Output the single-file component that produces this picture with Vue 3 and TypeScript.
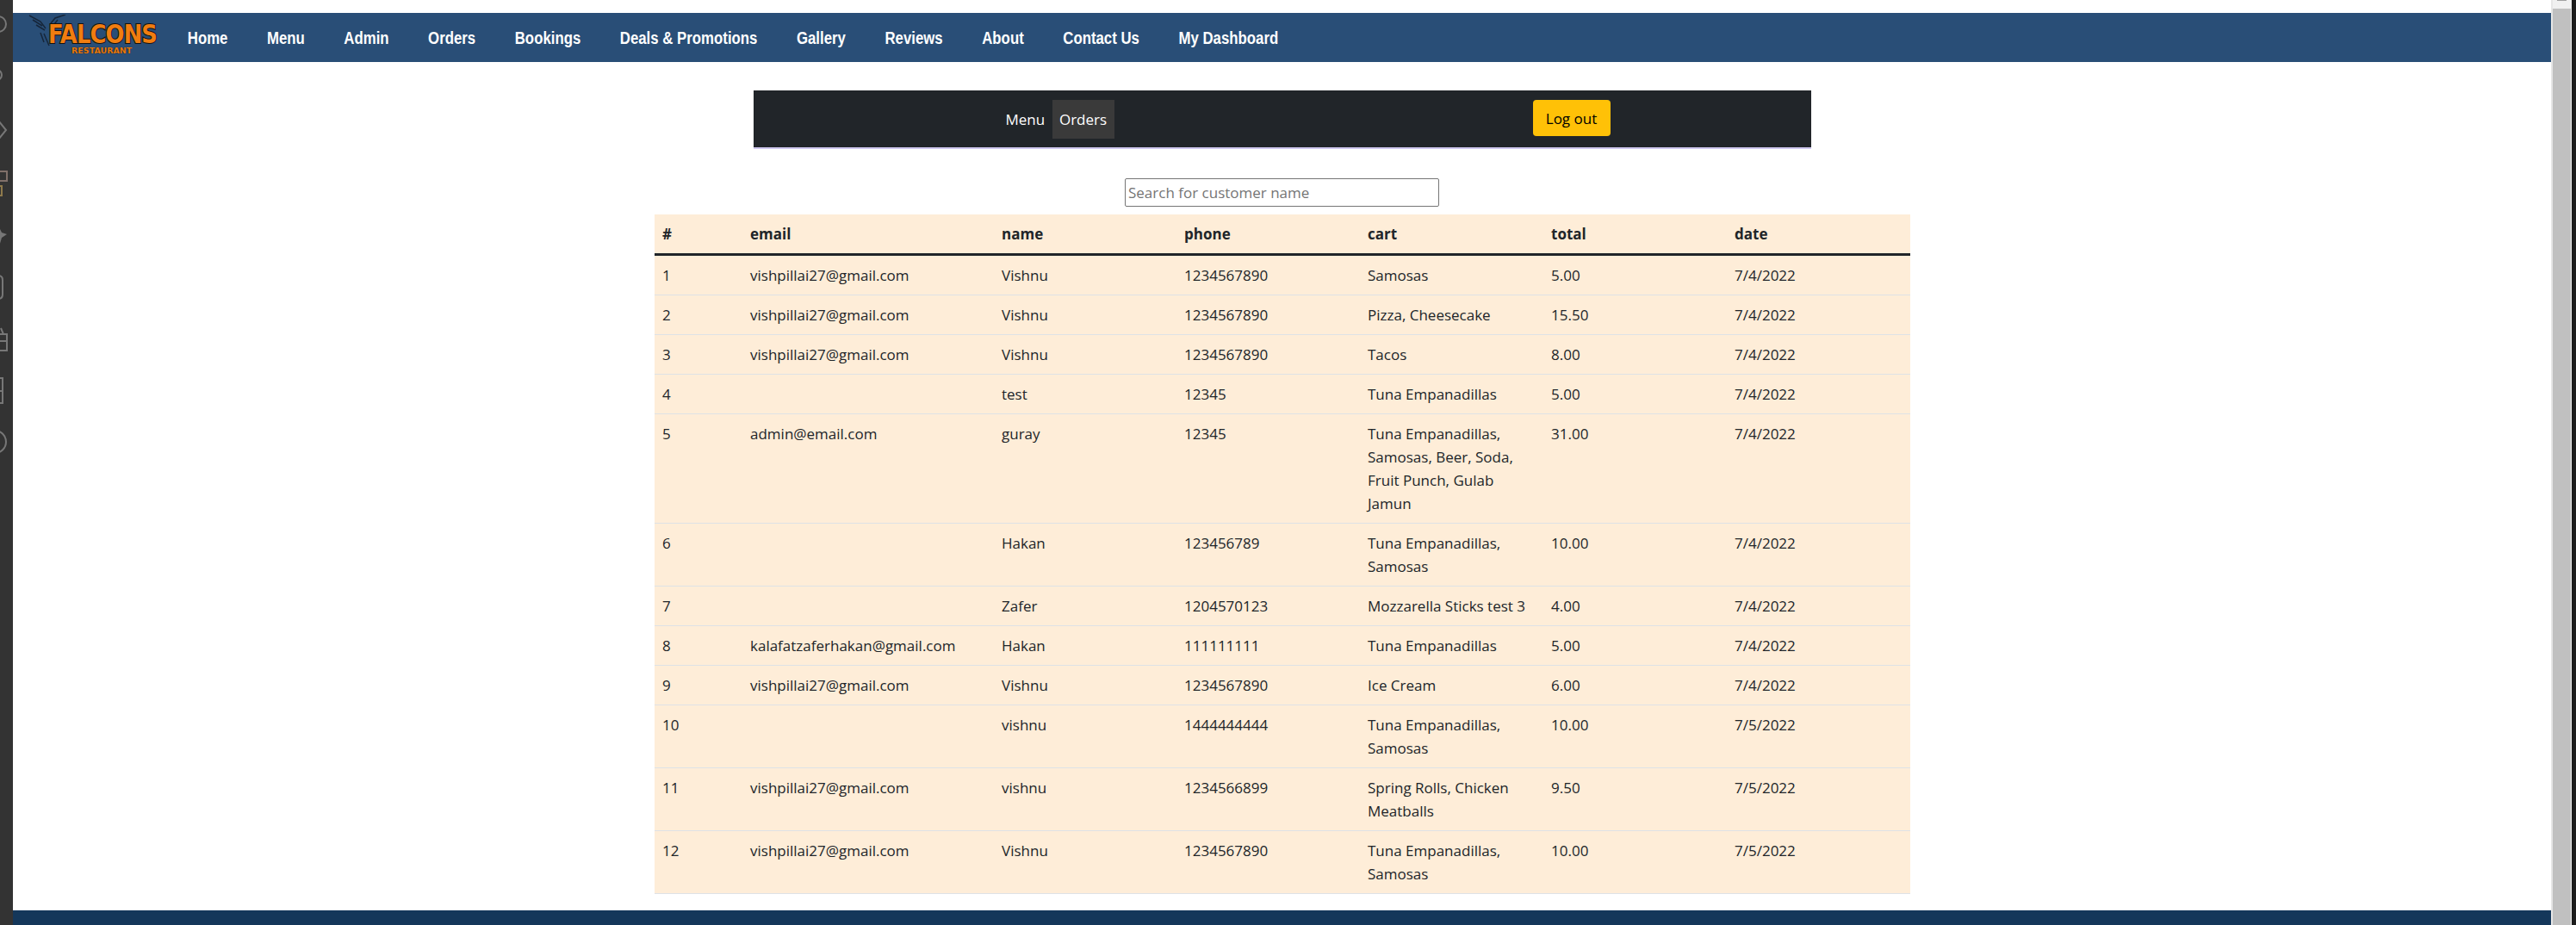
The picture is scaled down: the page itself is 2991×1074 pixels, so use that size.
<script setup lang="ts">
interface Order {
  id: number
  email: string
  name: string
  phone: string
  cart: string
  total: string
  date: string
}

const links: string[] = ['Home', 'Menu', 'Admin', 'Orders', 'Bookings', 'Deals & Promotions', 'Gallery', 'Reviews', 'About', 'Contact Us', 'My Dashboard']
const mail = 'vishpillai27@gmail.com'
const tuna = 'Tuna Empanadillas'

const orders: Order[] = [
  { id: 1, email: mail, name: 'Vishnu', phone: '1234567890', cart: 'Samosas', total: '5.00', date: '7/4/2022' },
  { id: 2, email: mail, name: 'Vishnu', phone: '1234567890', cart: 'Pizza, Cheesecake', total: '15.50', date: '7/4/2022' },
  { id: 3, email: mail, name: 'Vishnu', phone: '1234567890', cart: 'Tacos', total: '8.00', date: '7/4/2022' },
  { id: 4, email: '', name: 'test', phone: '12345', cart: tuna, total: '5.00', date: '7/4/2022' },
  { id: 5, email: 'admin@email.com', name: 'guray', phone: '12345', cart: 'Tuna Empanadillas, Samosas, Beer, Soda, Fruit Punch, Gulab Jamun', total: '31.00', date: '7/4/2022' },
  { id: 6, email: '', name: 'Hakan', phone: '123456789', cart: 'Tuna Empanadillas, Samosas', total: '10.00', date: '7/4/2022' },
  { id: 7, email: '', name: 'Zafer', phone: '1204570123', cart: 'Mozzarella Sticks test 3', total: '4.00', date: '7/4/2022' },
  { id: 8, email: 'kalafatzaferhakan@gmail.com', name: 'Hakan', phone: '111111111', cart: tuna, total: '5.00', date: '7/4/2022' },
  { id: 9, email: mail, name: 'Vishnu', phone: '1234567890', cart: 'Ice Cream', total: '6.00', date: '7/4/2022' },
  { id: 10, email: '', name: 'vishnu', phone: '1444444444', cart: 'Tuna Empanadillas, Samosas', total: '10.00', date: '7/5/2022' },
  { id: 11, email: mail, name: 'vishnu', phone: '1234566899', cart: 'Spring Rolls, Chicken Meatballs', total: '9.50', date: '7/5/2022' },
  { id: 12, email: mail, name: 'Vishnu', phone: '1234567890', cart: 'Tuna Empanadillas, Samosas', total: '10.00', date: '7/5/2022' },
]
</script>

<template>
  <div class="shell">
    <aside class="rail">
      <svg width="15" height="1074" viewBox="0 0 15 1074" fill="none" stroke="#777" stroke-width="2">
        <circle cx="-2" cy="28" r="9" />
        <circle cx="-4" cy="87" r="6" />
        <path d="M-2 140 L7 151 L-2 162" />
        <path d="M-2 199 H8 V210 H-2" stroke="#80706a" />
        <path d="M-2 216 H2 V227 H-2" stroke="#8f7a4c" />
        <path d="M-2 262 L2 270 L8 272 L2 276 L-1 286" fill="#777" stroke="none" />
        <path d="M-2 320 Q3 320 3 325 V342 Q3 347 -2 347" />
        <path d="M-2 388 H8 V407 H-2 M-2 396 H8 M1 381 L4 388" />
        <path d="M-2 439 H3 V468 H-2 M-2 454 H3" />
        <circle cx="-6" cy="513" r="13" />
      </svg>
    </aside>

    <div class="page">
      <header class="topbar">
        <a class="logo">
          <svg class="wing" width="48" height="38" viewBox="0 0 48 38" fill="none" stroke="#16263a" stroke-width="1.5">
            <path d="M1 1 L14 8 L20 16 M5 6 L16 13 M9 12 L19 18 M26 10 L31 4 L43 0 M27 15 L34 6 M18 22 L24 36 M14 21 L18 32" />
          </svg>
          <span class="logo-name">FALCONS</span>
          <span class="logo-sub">RESTAURANT</span>
        </a>
        <nav class="links">
          <a v-for="link in links" :key="link">{{ link }}</a>
        </nav>
      </header>

      <main class="content">
        <div class="subnav">
          <div class="subnav-links">
            <a>Menu</a>
            <a class="active">Orders</a>
          </div>
          <button class="logout" type="button">Log out</button>
        </div>

        <input class="search" type="text" placeholder="Search for customer name" />

        <table class="orders">
          <thead>
            <tr>
              <th class="c-id">#</th>
              <th class="c-email">email</th>
              <th class="c-name">name</th>
              <th class="c-col">phone</th>
              <th class="c-col">cart</th>
              <th class="c-col">total</th>
              <th class="c-col">date</th>
            </tr>
          </thead>
          <tbody>
            <tr v-for="o in orders" :key="o.id">
              <td>{{ o.id }}</td>
              <td>{{ o.email }}</td>
              <td>{{ o.name }}</td>
              <td>{{ o.phone }}</td>
              <td>{{ o.cart }}</td>
              <td>{{ o.total }}</td>
              <td>{{ o.date }}</td>
            </tr>
          </tbody>
        </table>
      </main>

      <footer class="footer"></footer>
    </div>

    <div class="scroll">
      <div class="scroll-track">
        <span class="scroll-arrow"></span>
        <span class="scroll-thumb"></span>
      </div>
      <div class="scroll-edge"></div>
    </div>
  </div>
</template>

<style>
html, body { margin: 0; background: #fff; overflow: hidden; }
</style>

<style scoped>
.shell {
  display: flex;
  width: 2991px;
  height: 1074px;
  overflow: hidden;
  font-family: "Open Sans", "Noto Sans", sans-serif;
  font-size: 17px;
  line-height: 27px;
  color: #212529;
}
.rail { flex: 0 0 15px; background: #333; overflow: hidden; }
.rail svg { display: block; }
.page {
  flex: 1 1 auto;
  min-width: 0;
  display: flex;
  flex-direction: column;
  padding-top: 15px;
  box-sizing: border-box;
}
.topbar {
  flex: 0 0 57px;
  display: flex;
  align-items: center;
  background: #294e77;
}
.logo {
  position: relative;
  flex: 0 0 180px;
  height: 57px;
  display: block;
}
.wing { position: absolute; left: 18px; top: 2px; }
.logo-name {
  position: absolute;
  left: 41px;
  top: 10px;
  font-family: "DejaVu Sans", sans-serif;
  font-size: 30px;
  line-height: 30px;
  font-weight: 700;
  letter-spacing: -1px;
  color: #f07d10;
  -webkit-text-stroke: 2px #111;
  paint-order: stroke fill;
  transform-origin: left center;
  transform: scaleX(0.86);
}
.logo-sub {
  position: absolute;
  left: 68px;
  top: 37px;
  font-family: "DejaVu Sans", sans-serif;
  font-size: 9.5px;
  line-height: 14px;
  font-weight: 700;
  color: #e8790f;
  letter-spacing: 0;
  text-shadow: 0 0 1px #000;
}
.links {
  display: flex;
  font-family: "Liberation Sans", sans-serif;
  font-size: 20px;
  line-height: 30px;
  font-weight: 700;
  color: #fff;
  transform-origin: left center;
  transform: scaleX(0.84);
}
.links a { padding: 0 27.1px; white-space: nowrap; }

.content {
  flex: 1 1 auto;
  display: flex;
  flex-direction: column;
  align-items: center;
  padding-top: 33px;
}
.subnav {
  box-sizing: border-box;
  width: 1228px;
  height: 68px;
  background: #212529;
  border-bottom: 2px solid #cfc8ef;
  display: flex;
  align-items: flex-start;
  padding: 11px 0 0 293px;
}
.subnav-links { display: flex; gap: 10px; color: #fff; }
.subnav-links a {
  height: 45px;
  line-height: 45px;
}
.subnav-links a:first-child { width: 44px; }
.subnav-links a.active { background: #3a3a3a; width: 72px; text-align: center; }
.logout {
  width: 90px;
  height: 42px;
  margin-left: 486px;
  padding: 0;
  border: 0;
  border-radius: 4px;
  background: #ffc107;
  color: #000;
  font: inherit;
}
.search {
  box-sizing: border-box;
  width: 365px;
  height: 33px;
  margin-top: 34px;
  padding: 0 3px;
  border: 1px solid #767676;
  border-radius: 2px;
  font: inherit;
  background: #fff;
}
.search::placeholder { color: #757575; }
.orders {
  margin-top: 9px;
  margin-left: 1px;
  width: 1458px;
  table-layout: fixed;
  border-collapse: collapse;
  background: #feedd8;
}
.c-id { width: 102px; }
.c-email { width: 292px; }
.c-name { width: 212px; }
.c-col { width: 213px; }
th, td {
  box-sizing: border-box;
  padding: 9px;
  text-align: left;
  vertical-align: top;
  border-bottom: 1px solid #dee2e6;
  font-weight: 400;
}
th { font-weight: 700; border-bottom: 3px solid #212529; }
.footer {
  flex: 0 0 17px;
  background: #14375a;
}
.scroll { flex: 0 0 29px; display: flex; }
.scroll-track {
  position: relative;
  flex: 0 0 24px;
  box-sizing: border-box;
  border-left: 2px solid #e6e6e6;
  background: #f0f0f0;
}
.scroll-arrow {
  position: absolute;
  left: 5px;
  top: 0;
  width: 11px;
  height: 1px;
  background: #a0a0a0;
}
.scroll-thumb {
  position: absolute;
  left: 0;
  top: 10px;
  width: 21px;
  bottom: 0;
  background: #c0c0c0;
}
.scroll-edge { flex: 1 1 auto; background: #1c1c1c; }
</style>
